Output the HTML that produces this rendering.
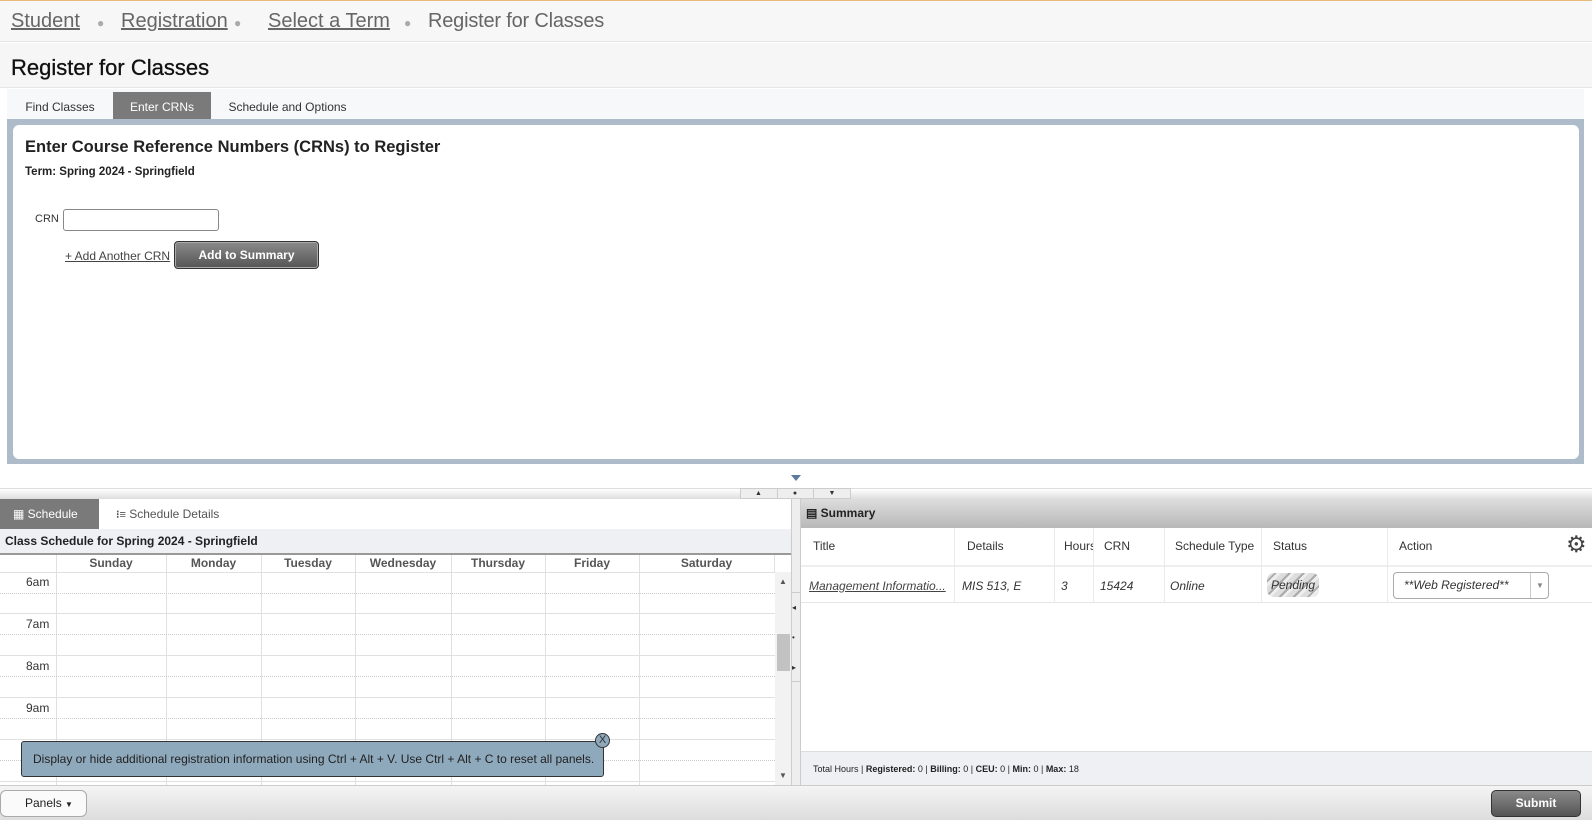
<!DOCTYPE html>
<html><head><meta charset="utf-8"><style>
*{box-sizing:border-box;margin:0;padding:0}
body{width:1592px;height:820px;overflow:hidden;font-family:"Liberation Sans",Arial,sans-serif;background:#fff;position:relative;color:#333}
.a{position:absolute}
.bc{left:0;top:0;width:1592px;height:42px;background:#f7f7f7;border-top:1px solid #e8b97a;border-bottom:1px solid #e3e3e3}
.bc span{position:absolute;top:9px;font-size:20px;color:#666}
.bc u{text-decoration:underline}
.dot{color:#aaa!important;font-size:12px!important;top:15px!important}
.hdr{left:0;top:43px;width:1592px;height:45px;background:#f6f6f6;border-bottom:1px solid #e6e6e6}
.tab{top:94px;height:27px;font-size:12px;line-height:27px;color:#333;text-align:center}
.th{font-size:12px;font-weight:bold;color:#555;text-align:center}
</style></head><body>
<div class="a bc">
<span style="left:11px"><u>Student</u></span><span class="dot" style="left:97px">●</span>
<span style="left:121px"><u>Registration</u></span><span class="dot" style="left:234px">●</span>
<span style="left:268px"><u>Select a Term</u></span><span class="dot" style="left:404px">●</span>
<span style="left:428px;letter-spacing:-0.2px">Register for Classes</span>
</div>
<div class="a hdr"><div class="a" style="left:11px;top:12px;font-size:22px;color:#111;-webkit-text-stroke:0.3px #111">Register for Classes</div></div>
<div class="a" style="left:7px;top:89px;width:1577px;height:30px;background:#f7f8fa"></div>
<div class="a" style="left:113px;top:92px;width:98px;height:27px;background:#7a7a7a"></div>
<div class="a tab" style="left:24px;width:72px">Find Classes</div>
<div class="a tab" style="left:113px;width:98px;color:#fff">Enter CRNs</div>
<div class="a tab" style="left:225px;width:125px">Schedule and Options</div>
<div class="a" style="left:7px;top:119px;width:1577px;height:345px;background:#aebbc8"></div>
<div class="a" style="left:13px;top:125px;width:1566px;height:334px;background:#fff;border-radius:6px"></div>
<div class="a" style="left:25px;top:138px;font-size:16.5px;font-weight:bold;color:#222">Enter Course Reference Numbers (CRNs) to Register</div>
<div class="a" style="left:25px;top:166px;font-size:11.5px;font-weight:bold;color:#222">Term: Spring 2024 - Springfield</div>
<div class="a" style="left:35px;top:213px;font-size:11px">CRN</div>
<div class="a" style="left:63px;top:209px;width:156px;height:22px;border:1px solid #888;border-radius:3px"></div>
<div class="a" style="left:65px;top:249px;font-size:12px;color:#444;text-decoration:underline">+ Add Another CRN</div>
<div class="a" style="left:174px;top:241px;width:145px;height:28px;border:1px solid #333;border-radius:4px;background:linear-gradient(#8a8a8a,#555);color:#fff;font-size:12px;font-weight:bold;text-align:center;line-height:26px;box-shadow:inset 0 0 0 1px #aaa">Add to Summary</div>
<div class="a" style="left:791px;top:475px;width:0;height:0;border-left:5px solid transparent;border-right:5px solid transparent;border-top:6px solid #5a7aa0"></div>
<div class="a" style="left:0;top:488px;width:1592px;height:11px;background:linear-gradient(#fff,#ddd);border-top:1px solid #ddd"></div>
<div class="a" style="left:740px;top:488px;width:111px;height:11px;border:1px solid #ccc;background:#eee;font-size:7px;line-height:9px">
<span class="a" style="left:14px">▲</span><span class="a" style="left:36px;border-left:1px solid #ccc;width:35px;text-align:center">●</span><span class="a" style="left:72px;border-left:1px solid #ccc;width:37px;text-align:center">▼</span></div>
<!-- left panel -->
<div class="a" style="left:0;top:499px;width:791px;height:30px;background:#fff"></div>
<div class="a" style="left:0;top:499px;width:99px;height:30px;background:#7a7a7a;color:#fff;font-size:12px;line-height:30px;padding-left:13px">▦ Schedule</div>
<div class="a" style="left:116px;top:499px;font-size:12px;line-height:30px;color:#555"><b style="font-size:11px">⁝≡</b> Schedule Details</div>
<div class="a" style="left:0;top:529px;width:791px;height:26px;background:#eef0f4;border-bottom:2px solid #999;font-size:12px;font-weight:bold;line-height:24px;padding-left:5px;color:#222">Class Schedule for Spring 2024 - Springfield</div>
<div class="a" style="left:0;top:555px;width:791px;height:230px;overflow:hidden">
<svg width="791" height="230" style="position:absolute;left:0;top:0">
<g stroke="#e0e0e0">
<line x1="56.5" y1="0" x2="56.5" y2="230"/><line x1="166.5" y1="0" x2="166.5" y2="230"/><line x1="261.5" y1="0" x2="261.5" y2="230"/><line x1="355.5" y1="0" x2="355.5" y2="230"/><line x1="451.5" y1="0" x2="451.5" y2="230"/><line x1="545.5" y1="0" x2="545.5" y2="230"/><line x1="639.5" y1="0" x2="639.5" y2="230"/><line x1="774.5" y1="0" x2="774.5" y2="17"/>
<line x1="0" y1="17.5" x2="775" y2="17.5"/><line x1="0" y1="58.5" x2="775" y2="58.5"/><line x1="0" y1="100.5" x2="775" y2="100.5"/><line x1="0" y1="142.5" x2="775" y2="142.5"/><line x1="0" y1="184.5" x2="775" y2="184.5"/><line x1="0" y1="226.5" x2="775" y2="226.5"/>
</g>
<g stroke="#ccc" stroke-dasharray="1,1"><line x1="0" y1="38.5" x2="775" y2="38.5"/><line x1="0" y1="79.5" x2="775" y2="79.5"/><line x1="0" y1="121.5" x2="775" y2="121.5"/><line x1="0" y1="163.5" x2="775" y2="163.5"/><line x1="0" y1="205.5" x2="775" y2="205.5"/></g>
</svg>
<div class="a th" style="left:56px;width:110px;top:1px">Sunday</div>
<div class="a th" style="left:166px;width:95px;top:1px">Monday</div>
<div class="a th" style="left:261px;width:94px;top:1px">Tuesday</div>
<div class="a th" style="left:355px;width:96px;top:1px">Wednesday</div>
<div class="a th" style="left:451px;width:94px;top:1px">Thursday</div>
<div class="a th" style="left:545px;width:94px;top:1px">Friday</div>
<div class="a th" style="left:639px;width:135px;top:1px">Saturday</div>
<div class="a" style="left:26px;top:20px;font-size:12px">6am</div>
<div class="a" style="left:26px;top:62px;font-size:12px">7am</div>
<div class="a" style="left:26px;top:104px;font-size:12px">8am</div>
<div class="a" style="left:26px;top:146px;font-size:12px">9am</div>
<div class="a" style="left:775px;top:17px;width:16px;height:213px;background:#f2f2f2;font-size:8px;color:#555;text-align:center"><div style="margin-top:5px">▲</div><div class="a" style="left:2px;top:62px;width:13px;height:37px;background:#c2c2c2"></div><div class="a" style="left:0;top:199px;width:16px">▼</div></div>
</div>
<div class="a" style="left:791px;top:499px;width:10px;height:286px;background:#eee;border-left:1px solid #ccc;border-right:1px solid #ccc"></div>
<div class="a" style="left:792px;top:592px;width:8px;height:90px;border-top:1px solid #ccc;border-bottom:1px solid #ccc;font-size:8px;color:#333;line-height:30px">◂<br>•<br>▸</div>
<!-- tooltip -->
<div class="a" style="left:21px;top:741px;width:583px;height:36px;background:#8fa9bc;border:1px solid #333;border-radius:3px;font-size:12px;line-height:34px;padding-left:11px;color:#222">Display or hide additional registration information using Ctrl + Alt + V. Use Ctrl + Alt + C to reset all panels.</div>
<div class="a" style="left:595px;top:733px;width:15px;height:15px;border-radius:50%;background:#8fa9bc;border:1px solid #333;font-size:11px;text-align:center;line-height:13px">X</div>
<!-- right panel -->
<div class="a" style="left:801px;top:499px;width:791px;height:29px;background:linear-gradient(#ddd,#b8b8b8);font-size:12px;font-weight:bold;line-height:29px;padding-left:5px;color:#222">▤ Summary</div>
<div class="a" style="left:801px;top:528px;width:791px;height:75px;border-bottom:1px solid #e6e6e6"></div>
<div class="a" style="left:801px;top:565px;width:791px;height:2px;background:#eee"></div>
<svg class="a" style="left:801px;top:528px" width="791" height="75"><g stroke="#eaeaea"><line x1="153.5" y1="0" x2="153.5" y2="75"/><line x1="253.5" y1="0" x2="253.5" y2="75"/><line x1="292.5" y1="0" x2="292.5" y2="75"/><line x1="363.5" y1="0" x2="363.5" y2="75"/><line x1="460.5" y1="0" x2="460.5" y2="75"/><line x1="586.5" y1="0" x2="586.5" y2="75"/></g></svg>
<div class="a" style="top:539px;font-size:12px;left:813px">Title</div>
<div class="a" style="top:539px;font-size:12px;left:967px">Details</div>
<div class="a" style="top:539px;font-size:12px;left:1064px;width:29px;overflow:hidden;white-space:nowrap">Hours</div>
<div class="a" style="top:539px;font-size:12px;left:1104px">CRN</div>
<div class="a" style="top:539px;font-size:12px;left:1175px">Schedule Type</div>
<div class="a" style="top:539px;font-size:12px;left:1273px">Status</div>
<div class="a" style="top:539px;font-size:12px;left:1399px">Action</div>
<div class="a" style="top:533px;left:1566px;font-size:23px;color:#444;line-height:23px">⚙</div>
<div class="a" style="top:579px;font-size:12px;left:809px;font-style:italic;text-decoration:underline;color:#444">Management Informatio...</div>
<div class="a" style="top:579px;font-size:12px;left:962px;font-style:italic">MIS 513, E</div>
<div class="a" style="top:579px;font-size:12px;left:1061px;font-style:italic">3</div>
<div class="a" style="top:579px;font-size:12px;left:1100px;font-style:italic">15424</div>
<div class="a" style="top:579px;font-size:12px;left:1170px;font-style:italic">Online</div>
<div class="a" style="top:573px;left:1267px;width:52px;height:24px;border-radius:7px;background:repeating-linear-gradient(135deg,#ddd 0 5px,#aaa 5px 7px,#eee 7px 10px);font-size:12px;font-style:italic;line-height:24px;padding-left:4px">Pending</div>
<div class="a" style="top:572px;left:1393px;width:156px;height:27px;border:1px solid #aaa;border-radius:4px;font-size:12px;font-style:italic;line-height:25px;padding-left:10px">**Web Registered**<span class="a" style="left:136px;top:0;width:19px;height:25px;border-left:1px solid #ccc;font-size:8px;color:#888;text-align:center;font-style:normal">▼</span></div>
<div class="a" style="left:801px;top:751px;width:791px;height:34px;background:#eef0f4;border-top:1px solid #ddd;font-size:9px;line-height:34px;padding-left:12px;color:#222">Total Hours | <b>Registered:</b> 0 | <b>Billing:</b> 0 | <b>CEU:</b> 0 | <b>Min:</b> 0 | <b>Max:</b> 18</div>
<!-- bottom -->
<div class="a" style="left:0;top:785px;width:1592px;height:35px;background:linear-gradient(#f4f4f4,#ddd);border-top:1px solid #ccc"></div>
<div class="a" style="left:0;top:790px;width:87px;height:27px;border:1px solid #aaa;border-radius:6px;background:#fafafa;font-size:12px;line-height:25px;padding-left:24px;color:#222">Panels <span style="font-size:8px">▼</span></div>
<div class="a" style="left:1491px;top:790px;width:90px;height:27px;border:1px solid #333;border-radius:5px;background:linear-gradient(#8a8a8a,#555);color:#fff;font-size:12px;font-weight:bold;text-align:center;line-height:25px">Submit</div>
</body></html>
